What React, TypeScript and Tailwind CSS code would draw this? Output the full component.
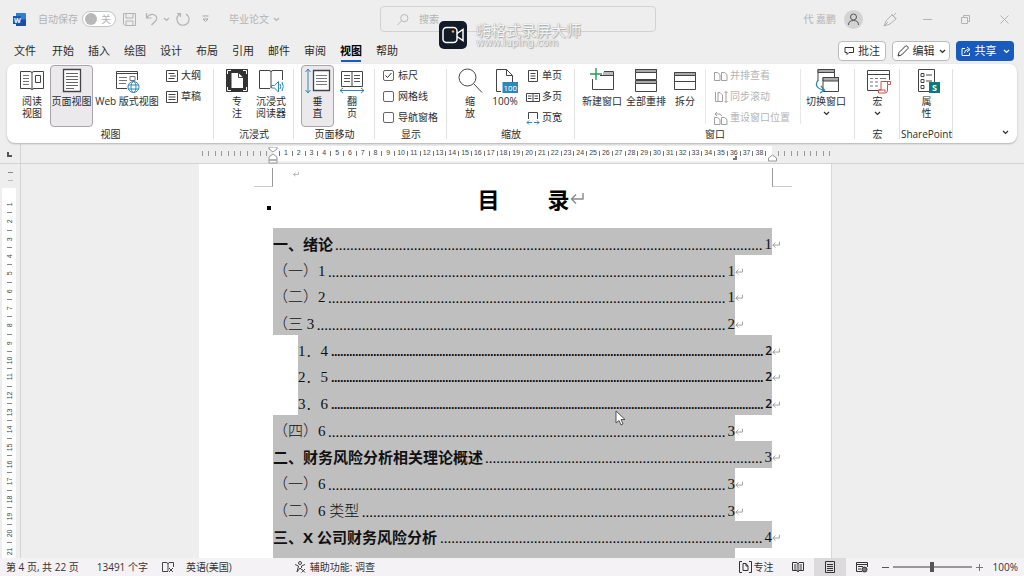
import React from 'react';
import clsx from 'clsx';

type IconProps = { className?: string };

const tabs = ['文件', '开始', '插入', '绘图', '设计', '布局', '引用', '邮件', '审阅', '视图', '帮助'];

const tocEntries = [
  { level: 1, title: '一、绪论', page: '1', dots: 114 },
  { level: 2, title: '（一）1', page: '1', dots: 106 },
  { level: 2, title: '（二）2', page: '1', dots: 106 },
  { level: 2, title: '（三 3', page: '2', dots: 109 },
  { level: 3, title: '1．4', page: '2', dots: 144 },
  { level: 3, title: '2．5', page: '2', dots: 144 },
  { level: 3, title: '3．6', page: '2', dots: 144 },
  { level: 2, title: '（四）6', page: '3', dots: 106 },
  { level: 1, title: '二、财务风险分析相关理论概述', page: '3', dots: 74 },
  { level: 2, title: '（一）6', page: '3', dots: 106 },
  { level: 2, title: '（二）6 类型', page: '3', dots: 97 },
  { level: 1, title: '三、X 公司财务风险分析', page: '4', dots: 86 }
];

const range = (n: number) => Array.from({ length: n }, (_, i) => i + 1);

const Svg = ({ size = 26, className, children }: { size?: number; className?: string; children: React.ReactNode }) => (
  <svg width={size} height={size} viewBox={`0 0 ${size} ${size}`} fill="none" stroke="#444" className={clsx('shrink-0', className)} aria-hidden="true">
    {children}
  </svg>
);

const Chevron = ({ className }: IconProps) => (
  <svg width="7" height="5" viewBox="0 0 7 5" fill="none" stroke="currentColor" strokeWidth="1.2" className={clsx('shrink-0', className)} aria-hidden="true">
    <path d="M1 1l2.5 2.5L6 1" />
  </svg>
);

const ReturnMark = ({ className }: IconProps) => (
  <svg viewBox="0 0 14 12" fill="none" stroke="#8a8a8a" strokeWidth="1.4" className={clsx('shrink-0', className)} aria-hidden="true">
    <path d="M13 1v6H1.5M6 2.5L1.5 7L6 11.5" />
  </svg>
);

const icons = {
  reading: (
    <Svg>
      <path d="M1.5 3.5h9.5q2 0 2 1.5q0-1.5 2-1.5h9.500v17H15q-2 0-2 1.500q0-1.500-2-1.500H1.500zM13 5v16" />
      <path d="M4 7.500h6M4 10.500h6M4 13.500h6M4 16.500h6" stroke="#777" />
      <path d="M16.500 7.500h5v7h-5z" />
    </Svg>
  ),
  printLayout: (
    <Svg>
      <path d="M4.500 1.500h17v22h-17z" strokeWidth="1.300" fill="#fff" />
      <path d="M7 5.500h12M7 8.500h12M7 11.500h12M7 14.500h12M7 17.500h12M7 20.500h8" stroke="#666" />
    </Svg>
  ),
  web: (
    <Svg>
      <path d="M13 20.500H2.500v-17h21V12M2.500 5.500h21" />
      <path d="M5 9.500h8M5 12.500h8M5 15.500h7M16 8.500h5v4h-5z" stroke="#777" />
      <circle cx="19.500" cy="19" r="5.500" fill="#fff" stroke="#2b88b8" />
      <ellipse cx="19.500" cy="19" rx="2.500" ry="5.500" stroke="#2b88b8" />
      <path d="M14.500 17h10M14.500 21h10" stroke="#2b88b8" />
    </Svg>
  ),
  focus: (
    <Svg>
      <path d="M2.500 1.500h21v22h-21z" fill="#333" stroke="#333" />
      <path d="M3.500 6V2.500H7M19 2.500h3.500V6M22.500 19v3.500H19M7 22.500H3.500V19" stroke="#fff" />
      <path d="M7.500 5h7l4.500 4.500V20H7.500z" fill="#fff" stroke="none" />
      <path d="M14.500 5v4.500H19" />
    </Svg>
  ),
  immersive: (
    <Svg>
      <path d="M12 20.500H1.500v-18H11q2 0 2 1.500q0-1.500 2-1.500h9.500V12M13 4v16" />
      <path d="M13.500 17.500h3l4-4v10.500l-4-4h-3z" fill="#fff" stroke="#2b88b8" />
      <path d="M22 16q1.500 2.500 0 5M24 14q2.500 4.500 0 9" stroke="#2b88b8" />
    </Svg>
  ),
  vertical: (
    <Svg>
      <path d="M3 1v24M.5 4L3 1l2.500 3M.5 22L3 25l2.500-3" stroke="#2b88b8" />
      <path d="M8.500 2.500h16v20h-16z" strokeWidth="1.300" fill="#fff" />
      <path d="M11 7.500h11M11 10.500h11M11 13.500h11M11 16.500h11" stroke="#777" />
    </Svg>
  ),
  sideToSide: (
    <Svg>
      <path d="M2.500 3.500h21v15h-21zM13 3.500v15" />
      <path d="M5 7.500h6M5 10.500h6M5 13.500h6M15 7.500h6M15 10.500h6M15 13.500h6" stroke="#555" />
      <path d="M1 22.500h24M4 20l-3 2.500L4 25M22 20l3 2.500L22 25" stroke="#2b88b8" />
    </Svg>
  ),
  zoom: (
    <Svg>
      <circle cx="10.500" cy="9.500" r="8.500" />
      <path d="M16.500 15.500l8.500 9" />
    </Svg>
  ),
  hundred: (
    <Svg>
      <path d="M9 23.500H4.500V1.500h10l6 6V14M14.500 1.500v6h6" />
      <path d="M10.500 14H26v11H10.500z" fill="#2b88b8" stroke="none" />
      <text x="11.500" y="22.500" fontSize="8" fill="#fff" stroke="none" fontFamily="Roboto">100</text>
    </Svg>
  ),
  newWindow: (
    <Svg>
      <path d="M14 4h11v3.500H14z" fill="#bbb" stroke="none" />
      <path d="M15 3.500h9.500v18h-21V11M11 7.500h13.500" />
      <path d="M7 0v12M1 6h12" stroke="#249b54" strokeWidth="1.400" />
    </Svg>
  ),
  arrange: (
    <Svg>
      <path d="M2.500 1.500h21v10h-21zM2.500 13.500h21v10h-21z" />
      <path d="M2.500 1.500h21v3h-21zM2.500 12.500h21v3h-21z" fill="#aaa" />
    </Svg>
  ),
  split: (
    <Svg>
      <path d="M2.500 4.500h21v17h-21zM2.500 13.500h21" />
      <path d="M2.500 4.500h21v3h-21z" fill="#aaa" />
    </Svg>
  ),
  switchWindow: (
    <Svg>
      <path d="M5 13V1.500h16.500V9M5 4.500h16.500" />
      <path d="M5 1.500h16.500v3H5z" fill="#aaa" />
      <path d="M10 9.500h15.500v14H10z" fill="#fff" />
      <path d="M10 9.500h15.500v3.500H10z" fill="#aaa" />
      <path d="M5 12q-5 8 6 10M8 18l3.500 4L7 25" stroke="#2b88b8" strokeWidth="1.300" />
    </Svg>
  ),
  macro: (
    <Svg>
      <path d="M14 22.500H2.500v-20h22V12M2.500 6.500h22" />
      <path d="M5 10.500h3M10 10.500h3M15 10.500h6M5 14h3M10 14h3M5 18h3M10 18h3" stroke="#777" />
      <path d="M16 13.500h9.500v3h-3V22q0 3-2.500 3h-6.500v-3H16zM22.500 16v-2.500M13.500 22H20v2" fill="#fff" stroke="#c9504b" />
    </Svg>
  ),
  property: (
    <Svg>
      <path d="M4.500 1.500h16v22h-16zM7 5.500h3v3H7zM7 11.500h3v3H7zM7 17.500h3v3H7z" />
      <path d="M12 7h6M12 13h6" />
      <path d="M15 14h11v11H15z" fill="#0b7a7d" stroke="none" />
      <text x="18" y="23" fontSize="9" fontWeight="700" fill="#fff" stroke="none" fontFamily="Open Sans">S</text>
    </Svg>
  )
};

const small = {
  outline: <Svg size={14}><path d="M1.500 1.500h11v11h-11zM3.500 4.500h6M5 7h6M3.500 9.500h6" /></Svg>,
  draft: <Svg size={14}><path d="M1.500 1.500h11v11h-11zM3.500 4.500h7M3.500 7h7M3.500 9.500h7" /></Svg>,
  onePage: <Svg size={14}><path d="M2.500 1.500h9v11h-9zM4.500 4.500h5M4.500 7h5M4.500 9.500h5" /></Svg>,
  multiPage: <Svg size={14}><path d="M.5 3.500h13v8H.5zM7 3.500v8M2 6h3.500M2 8.500h3.500M8.500 6H12M8.500 8.500H12" /></Svg>,
  pageWidth: <Svg size={14}><path d="M2.500 8V1.500h9V8" /><path d="M1 11.500h5M8 11.500h5M3 9.500l-2 2l2 2M11 9.500l2 2l-2 2" stroke="#2b88b8" /></Svg>,
  sideBySide: <Svg size={14} className="opacity-50"><path d="M.5 3.500h3l2.500 2v6H.5zM7.500 3.500h3l2.500 2v6H7.500z" /></Svg>,
  sync: <Svg size={14} className="opacity-50"><path d="M1.500 2v9.500h7V5L6 2.500H4v9M12 1.500v11M10.500 3L12 1.500L13.500 3M10.500 11l1.500 1.500l1.500-1.500" /></Svg>,
  reset: <Svg size={14} className="opacity-50"><path d="M.5 6.500h3l2.500 2v5H.5zM7.500 6.500h3l2.500 2v5H7.500zM1 3h5l2 2M3 1L1 3l2 2" /></Svg>
};

const BigButton = ({ icon, lines, className, active, menu }: { icon: React.ReactNode; lines: string[]; className: string; active?: boolean; menu?: boolean }) => (
  <button
    type="button"
    className={clsx(
      'flex h-[62px] shrink-0 flex-col items-center rounded border pt-0.5 leading-3 whitespace-nowrap',
      active ? 'border-[#a8a6a9] bg-[#ece9ed]' : 'border-transparent',
      className
    )}
  >
    <span className="mb-px">{icon}</span>
    {lines.map((line) => (
      <span key={line}>{line}</span>
    ))}
    {menu && <Chevron className="mt-1" />}
  </button>
);

const SmallButton = ({ icon, label, disabled }: { icon: React.ReactNode; label: string; disabled?: boolean }) => (
  <button type="button" disabled={disabled} className={clsx('flex h-[21px] items-center gap-0.5 whitespace-nowrap', disabled && 'text-[#b4b4b4]')}>
    {icon}
    {label}
  </button>
);

const CheckRow = ({ label, checked }: { label: string; checked?: boolean }) => (
  <label className="flex h-[21px] items-center gap-1 whitespace-nowrap">
    <span className="grid h-[11px] w-[11px]">
      <input type="checkbox" defaultChecked={checked} className="peer m-0 h-[11px] w-[11px] appearance-none rounded-xs border border-[#666] bg-white [grid-area:1/1]" />
      <svg width="11" height="11" viewBox="0 0 11 11" fill="none" stroke="#333" className="pointer-events-none hidden [grid-area:1/1] peer-checked:block">
        <path d="M2.500 5.500l2 2l4-4.500" />
      </svg>
    </span>
    {label}
  </label>
);

const Group = ({ label, className, children }: { label: string; className: string; children: React.ReactNode }) => (
  <section className={clsx('relative flex shrink-0 flex-col after:absolute after:inset-y-1 after:right-0 after:w-px after:bg-[#e0e0e0]', className)}>
    <div className="flex h-[63px]">{children}</div>
    <h2 className="text-center leading-[13px]">{label}</h2>
  </section>
);

const TitleBar = () => (
  <header className="grid h-[38px] shrink-0 grid-cols-[380fr_276fr_368fr] items-center text-[#b3b3b3]">
    <div className="flex items-center pl-[13px]">
      <svg width="13" height="13" viewBox="0 0 13 13" aria-hidden="true">
        <path d="M3 0h9q1 0 1 1v11q0 1-1 1H3z" fill="#2f7fd6" />
        <path d="M3 6.500h10V12q0 1-1 1H3z" fill="#174ea6" />
        <path d="M0 3h8v8H0z" fill="#1a56b8" />
        <text x="1" y="9.500" fontSize="7" fontWeight="700" fill="#fff" fontFamily="Open Sans">W</text>
      </svg>
      <span className="ml-3">自动保存</span>
      <button type="button" role="switch" aria-checked="false" aria-label="自动保存" className="ml-1 flex h-4 w-[34px] items-center justify-between rounded-full border border-[#c4c4c4] bg-white pr-1 pl-0.5">
        <span className="h-3 w-3 rounded-full bg-[#b8b8b8]" />
        关
      </button>
      <button type="button" aria-label="保存" className="ml-1.5">
        <svg width="15" height="15" viewBox="0 0 15 15" fill="none" stroke="#b3b3b3"><path d="M1.500 1.500h12v12H3l-1.500-1.500zM4 1.500v4.500h7V1.500M4 13.500V9h7v4.500" /></svg>
      </button>
      <button type="button" aria-label="撤消" className="ml-2 flex items-center gap-1">
        <svg width="14" height="14" viewBox="0 0 14 14" fill="none" stroke="#b3b3b3" strokeWidth="1.200"><path d="M1.500 1v5h5M1.500 6q3-4.500 7-3.500q5 2 2.500 6L6.500 13" /></svg>
        <Chevron />
      </button>
      <button type="button" aria-label="恢复" className="ml-1.5">
        <svg width="14" height="14" viewBox="0 0 14 14" fill="none" stroke="#b3b3b3" strokeWidth="1.200"><path d="M10 2q3 2 3 5a6 6 0 1 1-9-5M1 1.500h3.500V5" /></svg>
      </button>
      <button type="button" aria-label="自定义快速访问工具栏" className="ml-3">
        <svg width="7" height="8" viewBox="0 0 7 8" fill="none" stroke="#a5a5a5"><path d="M.5 1h6M1 4h5L3.500 6.500z" /></svg>
      </button>
      <button type="button" className="ml-5 flex items-center gap-1">
        毕业论文
        <Chevron />
      </button>
    </div>
    <label className="flex h-[26px] items-center rounded border border-[#d2d2d2] pl-4">
      <svg width="13" height="13" viewBox="0 0 13 13" fill="none" stroke="#b3b3b3" aria-hidden="true"><circle cx="8" cy="5" r="4" /><path d="M5 8l-4.500 4.500" /></svg>
      <input type="text" aria-label="搜索" placeholder="搜索" className="ml-2.5 w-full min-w-0 bg-transparent outline-none placeholder:text-[#b3b3b3]" />
    </label>
    <div className="flex items-center justify-end pr-[15px]">
      代 嘉鹏
      <svg width="19" height="19" viewBox="0 0 19 19" fill="none" stroke="#555" className="ml-2" aria-hidden="true">
        <circle cx="9.500" cy="9.500" r="9.500" fill="#d3d3d3" stroke="none" />
        <circle cx="9.500" cy="7" r="3" />
        <path d="M4.500 15q0-4.500 5-4.500t5 4.500" />
      </svg>
      <svg width="15" height="15" viewBox="0 0 15 15" fill="none" stroke="#b3b3b3" className="ml-5" aria-hidden="true"><path d="M1 14l2.500-6L9 3l4 4l-6 5zM8.500 2l5 5M10.500 3.500L13 1M1 14l4-4" /></svg>
      <button type="button" aria-label="最小化" className="ml-[25px]">
        <svg width="9" height="9" viewBox="0 0 9 9" stroke="#b3b3b3"><path d="M0 4.500h9" /></svg>
      </button>
      <button type="button" aria-label="还原" className="ml-[29px]">
        <svg width="9" height="9" viewBox="0 0 9 9" fill="none" stroke="#b3b3b3"><path d="M.5 2.500h6v6h-6zM2.500 2.500v-2h6v6h-2" /></svg>
      </button>
      <button type="button" aria-label="关闭" className="ml-[30px]">
        <svg width="9" height="9" viewBox="0 0 9 9" stroke="#b3b3b3"><path d="M.5.5l8 8M8.500.5l-8 8" /></svg>
      </button>
    </div>
  </header>
);

const TabRow = () => (
  <nav className="flex h-[26px] shrink-0 items-center pr-[10px] pl-[7px] text-[11px] text-[#2a2a2a]">
    {tabs.map((tab, i) => (
      <button
        key={tab}
        type="button"
        className={clsx('flex h-6 w-9 flex-col items-center leading-6 whitespace-nowrap', i === 0 && 'mr-0.5', tab === '视图' && 'font-bold text-black')}
      >
        {tab}
        {tab === '视图' && <span className="-mt-[3px] h-0.5 w-5 shrink-0 bg-[#185abd]" />}
      </button>
    ))}
    <div className="ml-auto flex gap-1.5">
      <button type="button" className="flex h-5 w-12 items-center justify-center gap-1 rounded border border-[#bbb] bg-white">
        <svg width="10" height="10" viewBox="0 0 10 10" fill="none" stroke="#333"><path d="M1 1.500h8.500v5H5l-2 2v-2H1z" /></svg>
        批注
      </button>
      <button type="button" className="flex h-5 w-[58px] items-center justify-center gap-1 rounded border border-[#bbb] bg-white">
        <svg width="12" height="12" viewBox="0 0 12 12" fill="none" stroke="#333"><path d="M1 11l1-3.500L8.500 1q1-.5 2 .5t.5 2L4.500 10z" /></svg>
        编辑
        <Chevron />
      </button>
      <button type="button" className="flex h-5 w-[58px] items-center justify-center gap-1 rounded bg-[#185abd] text-white">
        <svg width="10" height="10" viewBox="0 0 10 10" fill="none" stroke="#fff"><path d="M4 2.500H1v7h7.500V7M3.500 7q0-3.500 4-3.500M6 1l3 2.500L6 6" /></svg>
        共享
        <Chevron className="ml-0.5" />
      </button>
    </div>
  </nav>
);

const Ribbon = () => (
  <div className="relative z-10 mx-[7px] flex h-[79px] shrink-0 rounded-lg bg-white pt-px text-[#2d2d2d] shadow-[0_1px_2px_rgba(0,0,0,0.25)]">
    <Group label="视图" className="w-[207px]">
      <BigButton className="ml-[7px] w-9" icon={icons.reading} lines={['阅读', '视图']} />
      <BigButton className="w-[43px]" icon={icons.printLayout} lines={['页面视图']} active />
      <BigButton className="w-[68px]" icon={icons.web} lines={['Web 版式视图']} />
      <div className="ml-1">
        <SmallButton icon={small.outline} label="大纲" />
        <SmallButton icon={small.draft} label="草稿" />
      </div>
    </Group>
    <Group label="沉浸式" className="w-20">
      <BigButton className="ml-1.5 w-[34px]" icon={icons.focus} lines={['专', '注']} />
      <BigButton className="w-[34px]" icon={icons.immersive} lines={['沉浸式', '阅读器']} />
    </Group>
    <Group label="页面移动" className="w-[81px]">
      <BigButton className="ml-[7px] w-[33px]" icon={icons.vertical} lines={['垂', '直']} active />
      <BigButton className="w-9" icon={icons.sideToSide} lines={['翻', '页']} />
    </Group>
    <Group label="显示" className="w-[72px]">
      <div className="ml-2">
        <CheckRow label="标尺" checked />
        <CheckRow label="网格线" />
        <CheckRow label="导航窗格" />
      </div>
    </Group>
    <Group label="缩放" className="w-32">
      <BigButton className="ml-2 w-[30px]" icon={icons.zoom} lines={['缩', '放']} />
      <BigButton className="w-10" icon={icons.hundred} lines={['100%']} />
      <div className="ml-px">
        <SmallButton icon={small.onePage} label="单页" />
        <SmallButton icon={small.multiPage} label="多页" />
        <SmallButton icon={small.pageWidth} label="页宽" />
      </div>
    </Group>
    <Group label="窗口" className="w-[280px]">
      <BigButton className="ml-1.5 w-[42px]" icon={icons.newWindow} lines={['新建窗口']} />
      <BigButton className="w-[46px]" icon={icons.arrange} lines={['全部重排']} />
      <BigButton className="w-8" icon={icons.split} lines={['拆分']} />
      <div className="my-1 ml-1 border-l border-[#e8e8e8]" />
      <div className="ml-2">
        <SmallButton icon={small.sideBySide} label="并排查看" disabled />
        <SmallButton icon={small.sync} label="同步滚动" disabled />
        <SmallButton icon={small.reset} label="重设窗口位置" disabled />
      </div>
      <div className="my-1 ml-2.5 border-l border-[#e8e8e8]" />
      <BigButton className="ml-1 w-[42px]" icon={icons.switchWindow} lines={['切换窗口']} menu />
    </Group>
    <Group label="宏" className="w-[45px]">
      <BigButton className="w-full" icon={icons.macro} lines={['宏']} menu />
    </Group>
    <Group label="SharePoint" className="w-[53px]">
      <BigButton className="w-full" icon={icons.property} lines={['属', '性']} />
    </Group>
    <button type="button" aria-label="折叠功能区" className="mt-auto mr-2 mb-2 ml-auto">
      <Chevron />
    </button>
  </div>
);

const Ticks = ({ count }: { count: number }) => (
  <>
    {range(count).map((n) => (
      <span key={n} className="h-[5px] w-px bg-[#999]" />
    ))}
  </>
);

const HorizontalRuler = () => (
  <div className="flex h-5 shrink-0 border-b border-[#d4d4d4] pr-[14px] text-[7px] text-[#444]">
    <div className="relative mx-auto flex w-[633px] shrink-0">
      <div className="flex w-[74px] items-center justify-between pr-1.5 pl-[3px]">
        <Ticks count={11} />
      </div>
      <div className="my-0.5 flex w-[499px] items-center bg-white px-1.5 font-['Liberation_Sans',sans-serif]">
        {range(38).map((n) => (
          <span key={n} className="flex min-w-0 flex-1 items-center">
            <span className="h-[5px] w-px shrink-0 bg-[#777]" />
            <span className="min-w-0 flex-1 text-center">{n}</span>
          </span>
        ))}
        <span className="h-[5px] w-px bg-[#777]" />
      </div>
      <div className="flex w-[60px] items-center justify-between pr-0.5 pl-1.5">
        <Ticks count={9} />
      </div>
      <svg width="10" height="17" viewBox="0 0 10 17" fill="#fff" stroke="#999" className="absolute top-[3px] left-[69px]" aria-hidden="true">
        <path d="M1 0h8v2L5 5L1 2zM1 13v-3l4-3l4 3v3zM1 13h8v3H1z" />
      </svg>
      <svg width="9" height="8" viewBox="0 0 9 8" fill="#fff" stroke="#999" className="absolute top-[10px] left-[569px]" aria-hidden="true">
        <path d="M.5 7V4l4-3l4 3v3z" />
      </svg>
      <span className="absolute top-3 left-[534px] h-1 w-1 border-r-2 border-b-2 border-[#777]" />
    </div>
  </div>
);

const VerticalRuler = () => (
  <div className="flex w-[21px] shrink-0 flex-col overflow-hidden border-r border-[#d4d4d4]">
    <div className="h-5 shrink-0 border-b border-[#d4d4d4] pt-2 pl-[7px]">
      <span className="block h-[5px] w-[5px] border-b-2 border-l-2 border-[#555]" />
    </div>
    <div className="flex h-6 shrink-0 flex-col items-center justify-center gap-[7px]">
      <span className="h-px w-[5px] bg-[#888]" />
      <span className="h-px w-[5px] bg-[#bbb]" />
    </div>
    <div className="mr-1 ml-0.5 flex flex-1 flex-col overflow-hidden bg-white pt-2 font-['Liberation_Sans',sans-serif] text-[7px] leading-none text-[#444]">
      <div className="flex h-[364px] shrink-0 flex-col">
        {range(21).map((n) => (
          <span key={n} className="flex min-h-0 flex-1 flex-col items-center">
            <span className="flex min-h-0 flex-1 rotate-180 items-center justify-center [writing-mode:vertical-rl]">{n}</span>
            <span className="h-px w-[5px] shrink-0 bg-[#888]" />
          </span>
        ))}
      </div>
    </div>
  </div>
);

const TocRow = ({ level, title, page, dots }: { level: number; title: string; page: string; dots: number }) => (
  <li className="flex min-h-0 flex-1">
    <a
      href="#toc"
      className={clsx(
        'flex items-center bg-[#bfbfbf] pt-[5px] whitespace-nowrap',
        level === 1 && 'w-[499px]',
        level === 2 && 'w-[462px]',
        level === 3 && 'ml-[25px] w-[474px]'
      )}
    >
      <span className={level === 1 ? "font-['Open_Sans','Noto_Sans_CJK_SC',sans-serif] font-bold" : 'font-light'}>{title}</span>
      <span className={clsx('ml-auto pt-0.5 pr-0.5 text-black', level === 3 && 'text-xs leading-5 font-bold')}>{'.'.repeat(dots)}</span>
      <span className={clsx(level === 3 && "font-['Open_Sans',sans-serif] text-xs font-semibold")}>{page}</span>
    </a>
    <ReturnMark className="mt-[13px] h-[7px] w-2" />
  </li>
);

const Page = () => (
  <article className="relative mx-auto flex w-[633px] shrink-0 flex-col border-r border-[#d8d8d8] bg-white pl-[74px] font-['Liberation_Serif','Noto_Sans_CJK_SC',serif] text-[15px] leading-5 text-[#111]">
    <div className="mt-1 -ml-[19px] flex h-[19px] shrink-0">
      <span className="w-[19px] border-r border-b border-[#ccc] border-r-[#999]" />
      <ReturnMark className="mt-[3px] ml-5 h-[6px] w-[6px]" />
      <span className="ml-[473px] w-5 border-b border-l border-[#ccc] border-l-[#999]" />
    </div>
    <h1 className="flex h-[41px] w-[499px] shrink-0 items-center justify-center gap-12 pb-5 pl-4 font-['Noto_Sans_CJK_SC',sans-serif] text-[22px] font-bold text-black">
      <span>目</span>
      <span className="flex items-center">
        录
        <ReturnMark className="h-3 w-3.5" />
      </span>
    </h1>
    <ol id="toc" className="flex h-[320px] shrink-0 flex-col">
      {tocEntries.map((entry, i) => (
        <TocRow key={i} {...entry} />
      ))}
    </ol>
    <div className="w-[462px] flex-1 bg-[#bfbfbf]" />
    <span className="absolute top-[42px] left-[68px] h-1 w-1 bg-black" />
    <svg width="12" height="17" viewBox="0 0 12 17" fill="#fff" stroke="#333" strokeWidth=".8" className="absolute top-[246px] left-[416px]" aria-hidden="true">
      <path d="M1 1v12l3-2.500L6 15l2-1l-2-4.500h4z" />
    </svg>
  </article>
);

const StatusBar = () => (
  <footer className="flex h-[18px] shrink-0 items-center bg-[#f5f2f6] px-1.5 whitespace-nowrap text-[#333]">
    <span>第 4 页, 共 22 页</span>
    <span className="ml-[18px]">13491 个字</span>
    <svg width="12" height="12" viewBox="0 0 12 12" fill="none" stroke="#444" className="ml-3.5" aria-hidden="true"><path d="M6 10.500H.5v-9H5L6 3l1-1.500h4.500V6M6 3v7M7 7l4 4M11 7l-4 4" /></svg>
    <span className="ml-3">英语(美国)</span>
    <button type="button" className="ml-[62px] flex items-center gap-1">
      <svg width="12" height="12" viewBox="0 0 12 12" fill="none" stroke="#444"><circle cx="6" cy="2" r="1.500" /><path d="M1 3.500l3.500 1.500L3 11l3-4l2 2M11 3.500L7.500 5v2M7.500 8l3.500 3.500M11 8l-3.500 3.500" /></svg>
      辅助功能: 调查
    </button>
    <div className="ml-auto flex h-full items-center">
      <button type="button" className="flex items-center gap-0.5">
        <svg width="13" height="12" viewBox="0 0 13 12" fill="none" stroke="#333"><path d="M3 .5H.5v11H3M10 .5h2.500v11H10M4 2.500h3L9 5v4.500H4zM7 2.500V5h2" /></svg>
        专注
      </button>
      <button type="button" aria-label="阅读视图" className="ml-[18px]">
        <svg width="12" height="12" viewBox="0 0 12 12" fill="none" stroke="#333"><path d="M.5 1.500H5L6 3l1-1.500h4.500v8H7L6 11L5 9.500H.5zM6 3v8M2 4h2.500M2 6h2.500M2 8h2.500M7.500 4H10M7.500 6H10M7.500 8H10" /></svg>
      </button>
      <button type="button" aria-label="页面视图" className="ml-2.5 flex h-full w-8 items-center justify-center bg-[#dcdadd]">
        <svg width="10" height="12" viewBox="0 0 10 12" fill="none" stroke="#333"><path d="M.5.5h9v11h-9zM2 3.500h6M2 5.500h6M2 7.500h6M2 9.500h6" /></svg>
      </button>
      <button type="button" aria-label="Web 版式视图" className="ml-2.5">
        <svg width="12" height="12" viewBox="0 0 12 12" fill="none" stroke="#333"><path d="M6 10.500H.5v-9h11V6M.5 3.500h11M2 5.500h5M2 8h3" /><circle cx="8.500" cy="8.500" r="2.500" fill="#777" /></svg>
      </button>
      <button type="button" aria-label="缩小" className="ml-3.5">
        <svg width="7" height="7" viewBox="0 0 7 7" stroke="#555"><path d="M0 3.500h7" /></svg>
      </button>
      <input
        type="range"
        aria-label="缩放"
        defaultValue={50}
        className="mx-1 h-0.5 w-[79px] appearance-none bg-[#999] [&::-webkit-slider-thumb]:h-2.5 [&::-webkit-slider-thumb]:w-1 [&::-webkit-slider-thumb]:appearance-none [&::-webkit-slider-thumb]:bg-[#555]"
      />
      <button type="button" aria-label="放大">
        <svg width="7" height="7" viewBox="0 0 7 7" stroke="#777"><path d="M0 3.500h7M3.500 0v7" /></svg>
      </button>
      <span className="ml-2.5">100%</span>
    </div>
  </footer>
);

const Watermark = () => (
  <div className="pointer-events-none absolute top-[21px] left-[439px] z-20 flex items-center gap-[9px]">
    <svg width="28" height="28" viewBox="0 0 28 28" fill="none" stroke="#fff" strokeWidth="1.500" aria-hidden="true">
      <rect width="28" height="28" rx="5" fill="#141b28" stroke="none" />
      <rect x="4" y="6.500" width="14" height="15" rx="3.500" />
      <path d="M18 12.500l6-4v11l-6-4" />
      <circle cx="14" cy="10.500" r="1.200" fill="#e9b53c" stroke="none" />
    </svg>
    <div className="whitespace-nowrap text-[#f4f4f4] [text-shadow:1px_1px_1px_#aaa,0_0_1px_#888]">
      <p className="text-[15px] leading-4">嗨格式录屏大师</p>
      <p className="font-['DejaVu_Sans',sans-serif] leading-[10px]">www.luping.com</p>
    </div>
  </div>
);

export default function App() {
  return (
    <div className="relative flex h-screen flex-col overflow-hidden bg-[#eeeeee] font-['Open_Sans','Noto_Sans_CJK_SC',sans-serif] text-[10px]">
      <TitleBar />
      <TabRow />
      <Ribbon />
      <main className="flex min-h-0 flex-1 pt-px">
        <VerticalRuler />
        <div className="flex min-w-0 flex-1 flex-col">
          <HorizontalRuler />
          <div className="flex min-h-0 flex-1 overflow-hidden pr-[14px]">
            <Page />
          </div>
        </div>
      </main>
      <StatusBar />
      <Watermark />
    </div>
  );
}
